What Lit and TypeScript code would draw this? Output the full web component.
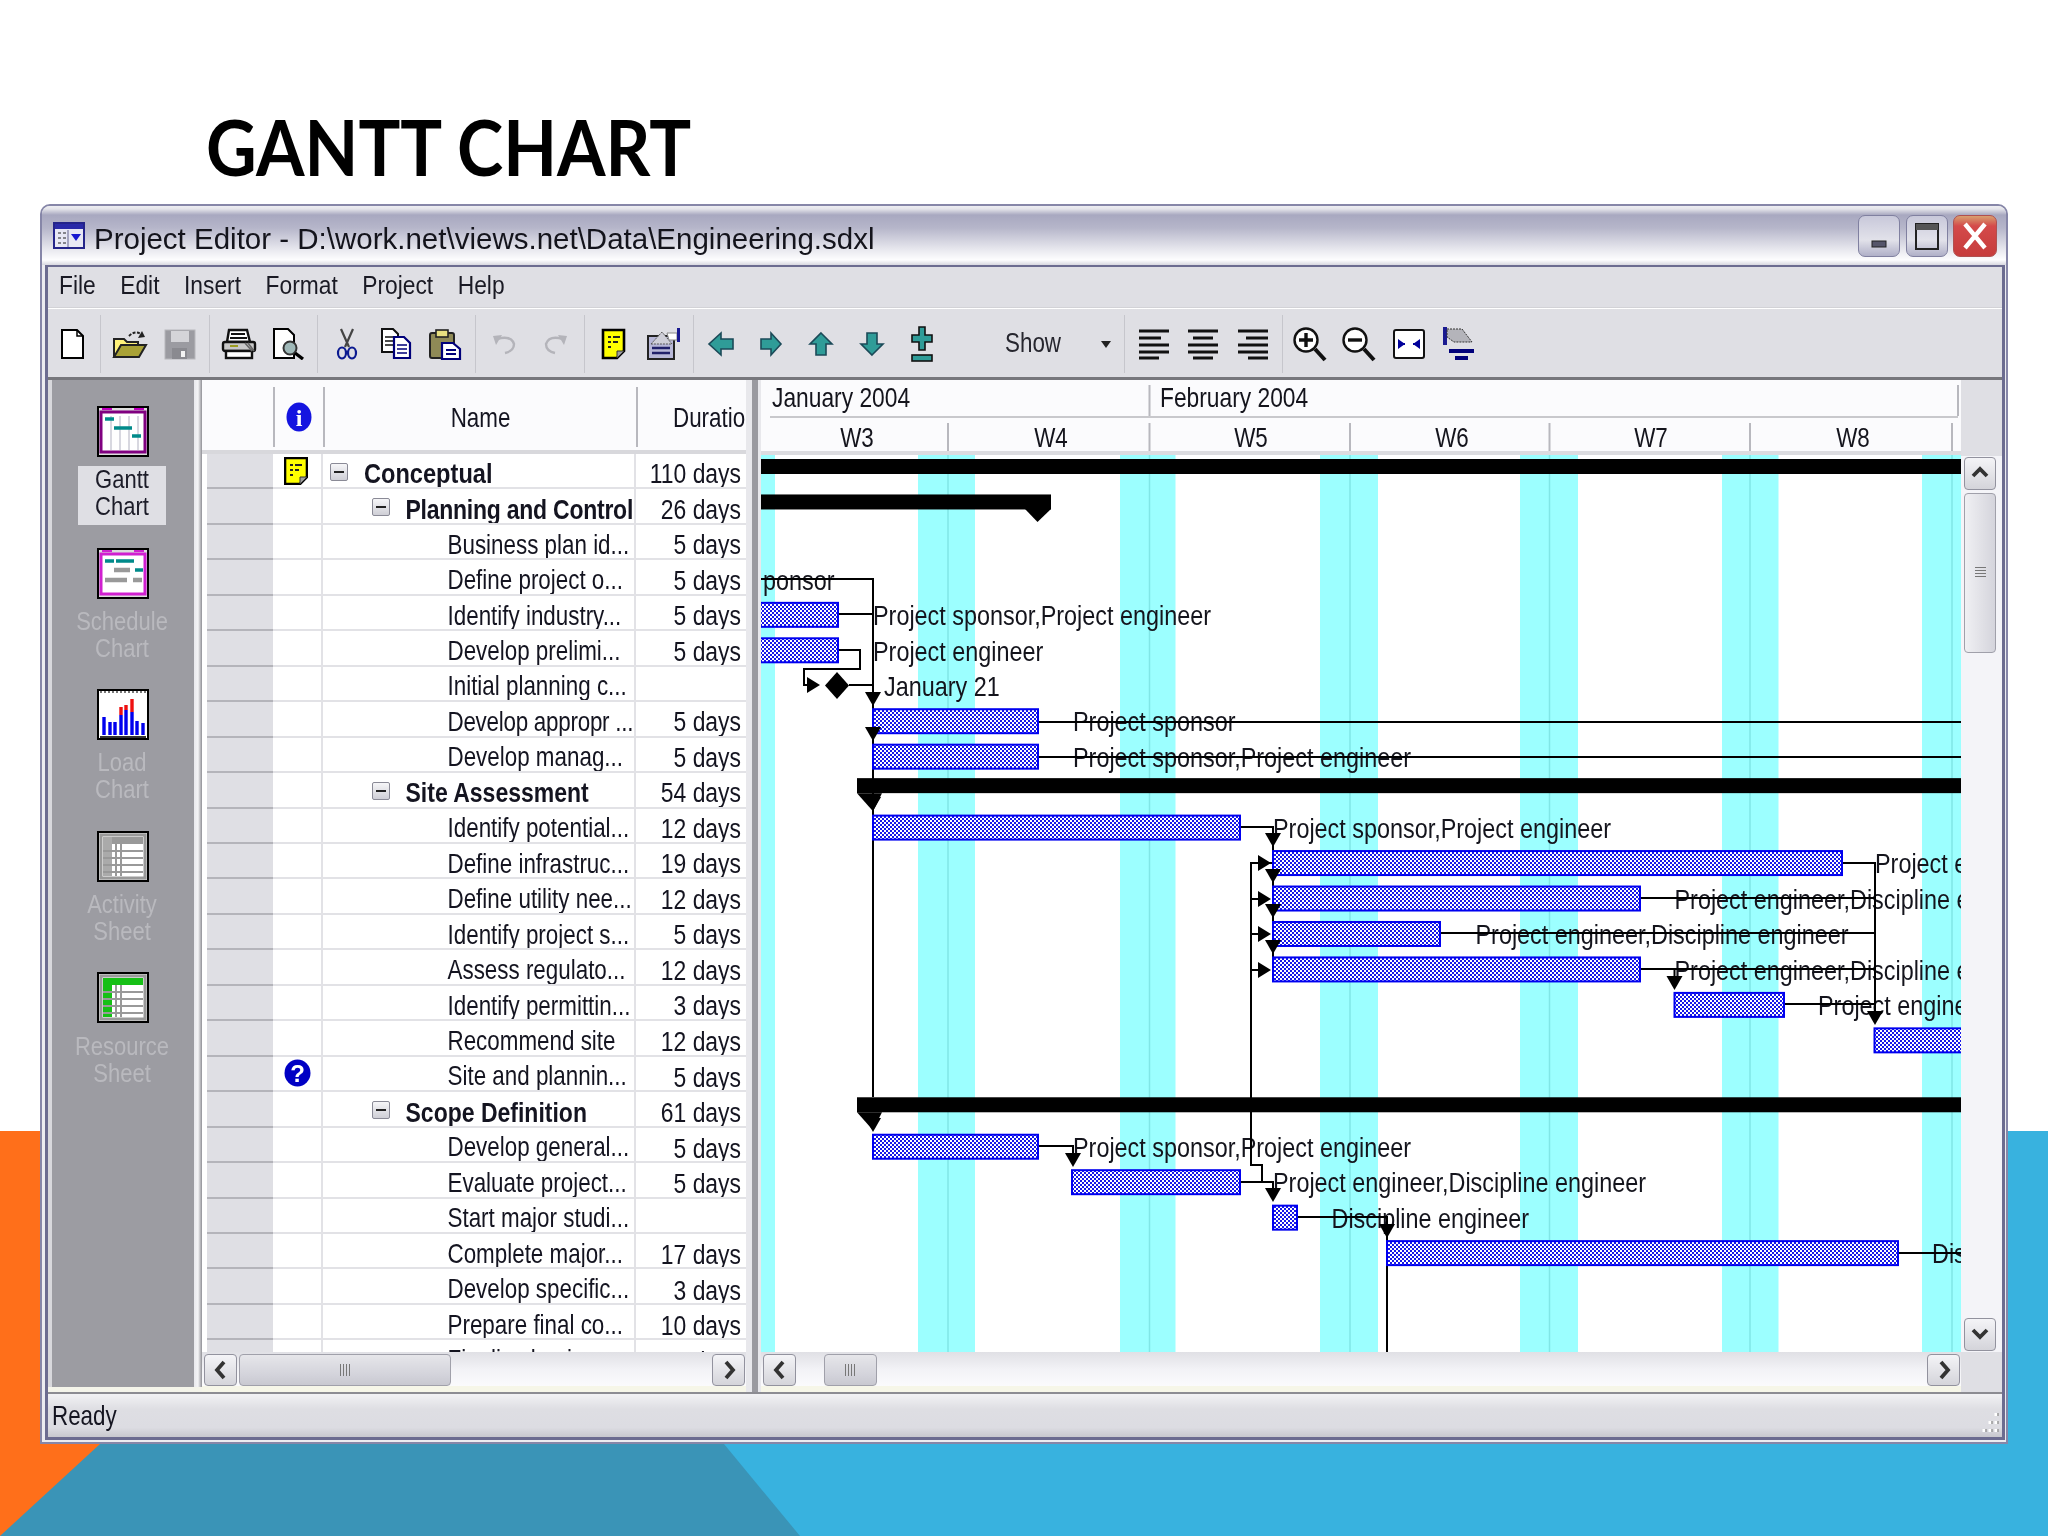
import { LitElement, html, svg, css } from 'lit';
import { customElement } from 'lit/decorators.js';

type Row = { name: string; dur: string; level: number; mark?: 'note' | 'help'; tight?: boolean };

const ROWS: Row[] = [
  { name: 'Conceptual', dur: '110 days', level: 0, mark: 'note' },
  { name: 'Planning and Control', dur: '26 days', level: 1, tight: true },
  { name: 'Business plan id...', dur: '5 days', level: 2 },
  { name: 'Define project o...', dur: '5 days', level: 2 },
  { name: 'Identify industry...', dur: '5 days', level: 2 },
  { name: 'Develop prelimi...', dur: '5 days', level: 2 },
  { name: 'Initial planning c...', dur: '', level: 2 },
  { name: 'Develop appropr ...', dur: '5 days', level: 2, tight: true },
  { name: 'Develop manag...', dur: '5 days', level: 2 },
  { name: 'Site Assessment', dur: '54 days', level: 1 },
  { name: 'Identify potential...', dur: '12 days', level: 2 },
  { name: 'Define infrastruc...', dur: '19 days', level: 2 },
  { name: 'Define utility nee...', dur: '12 days', level: 2 },
  { name: 'Identify project s...', dur: '5 days', level: 2 },
  { name: 'Assess regulato...', dur: '12 days', level: 2 },
  { name: 'Identify permittin...', dur: '3 days', level: 2 },
  { name: 'Recommend site', dur: '12 days', level: 2 },
  { name: 'Site and plannin...', dur: '5 days', level: 2, mark: 'help' },
  { name: 'Scope Definition', dur: '61 days', level: 1 },
  { name: 'Develop general...', dur: '5 days', level: 2 },
  { name: 'Evaluate project...', dur: '5 days', level: 2 },
  { name: 'Start major studi...', dur: '', level: 2 },
  { name: 'Complete major...', dur: '17 days', level: 2 },
  { name: 'Develop specific...', dur: '3 days', level: 2 },
  { name: 'Prepare final co...', dur: '10 days', level: 2 },
  { name: 'Finalize basis...', dur: '5 days', level: 2 },
];

// chart is drawn in page coordinates, the svg viewBox starts at 761,380
const ROW_H = 35.46;
const summaryTop = (r: number) => 459 + ROW_H * r;
const barTop = (r: number) => 460 + ROW_H * r;
const baseline = (r: number) => 483.2 + ROW_H * r;

const STRIPES = [
  [761, 775],
  [918, 975],
  [1120, 1175.5],
  [1320, 1378],
  [1520, 1578],
  [1722, 1778.5],
  [1922, 1961],
];
const WEEK_LINES = [948, 1149.5, 1350, 1549.5, 1750, 1952];
const WEEKS: [string, number][] = [
  ['W3', 857],
  ['W4', 1051],
  ['W5', 1251],
  ['W6', 1452],
  ['W7', 1651],
  ['W8', 1853],
];

const BARS = [
  [4, 759, 838],
  [5, 759, 838],
  [7, 873, 1038],
  [8, 873, 1038],
  [10, 873, 1240],
  [11, 1273, 1842],
  [12, 1273, 1640],
  [13, 1273, 1440],
  [14, 1273, 1640],
  [15, 1674.5, 1784],
  [16, 1874.5, 1970],
  [19, 873, 1038],
  [20, 1072, 1240],
  [21, 1273, 1297],
  [22, 1387, 1898],
];

const SPONSOR_ENG = 'Project sponsor,Project engineer';
const ENG_DISC = 'Project engineer,Discipline engineer';
const LABELS: [number, number, string][] = [
  [3, 763, 'ponsor'],
  [4, 873, SPONSOR_ENG],
  [5, 873, 'Project engineer'],
  [6, 884, 'January 21'],
  [7, 1073, 'Project sponsor'],
  [8, 1073, SPONSOR_ENG],
  [10, 1273, SPONSOR_ENG],
  [11, 1875, 'Project engineer'],
  [12, 1674.5, ENG_DISC],
  [13, 1475.5, ENG_DISC],
  [14, 1674.5, ENG_DISC],
  [15, 1818, 'Project engineer'],
  [19, 1073, SPONSOR_ENG],
  [20, 1273, ENG_DISC],
  [21, 1331.5, 'Discipline engineer'],
  [22, 1932, 'Discipline engineer'],
];

const LINKS = [
  '761,579 873,579 873,1097',
  '838,614 873,614',
  '838,650 860,650 860,669 804,669 804,685 815,685',
  '849,685 873,685',
  '1038,722 1961,722',
  '1038,757 1961,757',
  '1240,827 1273,827 1273,960',
  '1273,863 1251,863 1251,1165 1262,1165 1262,1181',
  '1251,899 1265,899',
  '1251,934 1265,934',
  '1251,970 1265,970',
  '1842,863 1875,863 1875,1015',
  '1640,898 1875,898',
  '1440,933 1875,933',
  '1640,969 1875,969',
  '1674.5,969 1674.5,980',
  '1784,1004 1875,1004',
  '1038,1146 1073,1146 1073,1160',
  '1240,1182 1273,1182 1273,1195',
  '1297,1217 1387,1217 1387,1352',
  '1898,1253 1961,1253',
];
const DOWN = [
  [873, 706],
  [873, 741],
  [873, 811],
  [873, 1132],
  [1273, 847],
  [1273, 883],
  [1273, 918],
  [1273, 954],
  [1674.5, 990],
  [1875, 1025],
  [1073, 1167],
  [1273, 1202],
  [1387, 1238],
];
const RIGHT = [
  [820, 685],
  [1271, 863],
  [1271, 899],
  [1271, 934],
  [1271, 970],
];

const ic = (w: number, h: number, body: unknown) =>
  html`<svg width=${w} height=${h} viewBox="0 0 ${w} ${h}">${body}</svg>`;

const tealArrow = (pts: string) =>
  ic(36, 32, svg`<polygon points=${pts} fill="#2f9c98" stroke="#1b4a58" stroke-width="1.6"/>`);

const TOOL_ICONS: Record<string, unknown> = {
  new: ic(36, 32, svg`<path d="M7 2h15l6 6v22H7z" fill="#fff" stroke="#000" stroke-width="2"/><path d="M22 2v6h6" fill="none" stroke="#000" stroke-width="1.5"/>`),
  open: ic(36, 32, svg`
    <path d="M2 29V11h10l3 3h11v4" fill="#fff27a" stroke="#222" stroke-width="2"/>
    <path d="M2 29 9 17h25l-7 12z" fill="#a9a236" stroke="#222" stroke-width="2"/>
    <path d="M17 8q6-6 12-2" fill="none" stroke="#222" stroke-width="2" stroke-dasharray="3 1.5"/>
    <path d="M26 10l7-1-3-6z" fill="#222"/>`),
  save: ic(36, 32, svg`
    <rect x="3" y="2" width="30" height="29" fill="#9b9ba1" stroke="#b8b8bc"/>
    <rect x="9" y="3" width="18" height="11" fill="#d4d4d8"/>
    <rect x="10" y="20" width="15" height="11" fill="#8a8a90"/>
    <rect x="19" y="23" width="4" height="6" fill="#f4f4f4"/>`),
  print: ic(36, 32, svg`
    <path d="M8 2h18l3 12H6z" fill="#fff" stroke="#111" stroke-width="2.4"/>
    <path d="M10 6h14M9 10h17" stroke="#111" stroke-width="2"/>
    <rect x="2" y="14" width="32" height="9" rx="2" fill="#c8c8c8" stroke="#111" stroke-width="2.4"/>
    <rect x="5" y="23" width="26" height="7" fill="#fff" stroke="#111" stroke-width="2.4"/>
    <path d="M9 18h8" stroke="#9c9c20" stroke-width="2"/>
    <path d="M27 15l6 8M24 15l7 8" stroke="#666" stroke-width="1.6"/>`),
  preview: ic(36, 32, svg`
    <path d="M3 1h14l6 6v23H3z" fill="#fff" stroke="#000" stroke-width="2"/>
    <circle cx="19" cy="20" r="6.5" fill="#9fb8b8" stroke="#333" stroke-width="2"/>
    <path d="M24 25l8 6" stroke="#000" stroke-width="3.4"/>`),
  cut: ic(24, 32, svg`
    <path d="M6 1l8 18M18 1l-8 18" stroke="#444" stroke-width="2.2"/>
    <ellipse cx="7" cy="25" rx="4" ry="5.5" fill="none" stroke="#0b1a90" stroke-width="2.2"/>
    <ellipse cx="17" cy="25" rx="4" ry="5.5" fill="none" stroke="#0b1a90" stroke-width="2.2"/>`),
  copy: ic(36, 32, svg`
    <path d="M3 1h11l5 5v18H3z" fill="#fff" stroke="#111" stroke-width="2"/>
    <path d="M6 9h9M6 13h9M6 17h9" stroke="#111" stroke-width="1.5"/>
    <path d="M15 9h10l6 6v15H15z" fill="#fff" stroke="#00007a" stroke-width="2.2"/>
    <path d="M18 17h10M18 21h10M18 25h10" stroke="#00007a" stroke-width="1.6"/>`),
  paste: ic(36, 32, svg`
    <rect x="2" y="5" width="24" height="25" rx="2" fill="#8f8a56" stroke="#222" stroke-width="2"/>
    <rect x="8" y="2" width="12" height="7" fill="#e8e080" stroke="#222" stroke-width="1.6"/>
    <path d="M14 15h11l7 6v10H14z" fill="#fff" stroke="#00007a" stroke-width="2.2"/>
    <path d="M18 22h10M18 26h10" stroke="#00007a" stroke-width="1.8"/>`),
  undo: ic(32, 28, svg`<path d="M8 9q14-4 17 5 0 7-9 9" fill="none" stroke="#b4b4ba" stroke-width="2.4"/><path d="M4 6l9-1-6 10z" fill="#b4b4ba"/>`),
  redo: ic(32, 28, svg`<path d="M24 9q-14-4-17 5 0 7 9 9" fill="none" stroke="#b4b4ba" stroke-width="2.4"/><path d="M28 6l-9-1 6 10z" fill="#b4b4ba"/>`),
  note: ic(26, 32, svg`
    <path d="M2 2h21v21l-7 7H2z" fill="#ffff00" stroke="#000" stroke-width="2.6"/>
    <path d="M7 9h3M12 9h7M7 14h3M12 14h5M7 19h3" stroke="#222" stroke-width="2"/>
    <path d="M16 30v-7h7z" fill="#a0a0a0" stroke="#333"/>`),
  props: ic(36, 32, svg`
    <rect x="2" y="8" width="26" height="23" fill="#b8b8d8" stroke="#222" stroke-width="2"/>
    <path d="M6 20h18M6 25h18" stroke="#20206a" stroke-width="2.4"/>
    <path d="M5 16 16 4l10 12z" fill="#cfcfd8" stroke="#555" stroke-dasharray="2 1"/>
    <path d="M21 5h10v7h-8z" fill="#fff" stroke="#888"/>
    <rect x="31" y="0" width="3" height="14" fill="#1a1a90"/>`),
  left: tealArrow('19,5 19,11 31,11 31,21 19,21 19,27 7,16'),
  right: tealArrow('18,5 18,11 8,11 8,21 18,21 18,27 28,16'),
  up: tealArrow('18,5 29,16 23,16 23,27 13,27 13,16 7,16'),
  down: tealArrow('18,27 29,16 23,16 23,5 13,5 13,16 7,16'),
  add: ic(36, 38, svg`
    <path d="M15 2h6v8h7v7h-7v8h-6v-8H8v-7h7z" fill="#2f9c98" stroke="#111" stroke-width="1.6"/>
    <rect x="8" y="30" width="20" height="6" fill="#2f9c98" stroke="#111" stroke-width="1.6"/>`),
  alignL: ic(34, 34, svg`<path d="M3 4h30M3 11h22M3 18h30M3 25h30M3 31h20" stroke="#111" stroke-width="3" fill="none"/>`),
  alignC: ic(34, 34, svg`<path d="M3 4h30M8 11h20M3 18h30M3 25h30M8 31h20" stroke="#111" stroke-width="3" fill="none"/>`),
  alignR: ic(34, 34, svg`<path d="M3 4h30M11 11h22M3 18h30M3 25h30M13 31h20" stroke="#111" stroke-width="3" fill="none"/>`),
  zoomIn: ic(36, 36, svg`
    <circle cx="14" cy="14" r="11.5" fill="#fff" stroke="#111" stroke-width="2.4"/>
    <path d="M7 14h14M14 7v14" stroke="#111" stroke-width="3.4"/>
    <path d="M23 23l10 11" stroke="#111" stroke-width="4"/>`),
  zoomOut: ic(36, 36, svg`
    <circle cx="14" cy="14" r="11.5" fill="#fff" stroke="#111" stroke-width="2.4"/>
    <path d="M7 14h14" stroke="#111" stroke-width="3.4"/>
    <path d="M23 23l10 11" stroke="#111" stroke-width="4"/>`),
  fit: ic(36, 34, svg`
    <rect x="3" y="3" width="30" height="28" rx="2" fill="#fff" stroke="#111" stroke-width="2"/>
    <path d="M14 17l-7-5v10zM22 17l7-5v10z" fill="#00009a"/>
    <path d="M12 17h2M22 17h2" stroke="#00009a" stroke-width="2"/>`),
  filter: ic(36, 38, svg`
    <rect x="3" y="2" width="4" height="18" fill="#1a1a90"/>
    <path d="M7 4h15l10 13H14L7 12z" fill="#b4b4ba" stroke="#333" stroke-dasharray="2 1"/>
    <rect x="9" y="24" width="25" height="4" fill="#00007a"/>
    <rect x="15" y="31" width="13" height="4" fill="#00007a"/>`),
};

const VIEW_ICONS: unknown[] = [
  svg`
    <rect x="4" y="6" width="44" height="40" fill="#fff" stroke="#800080" stroke-width="3"/>
    <path d="M5 3h10M37 3h10" stroke="#c000c0" stroke-width="2"/>
    <path d="M14 10v34M23 10v34M32 10v34M41 10v34" stroke="#d8d8e0" stroke-width="2"/>
    <path d="M8 13h9M17 22h18M35 30h9" stroke="#008a8a" stroke-width="3.4"/>`,
  svg`
    <rect x="4" y="6" width="44" height="40" fill="#fff" stroke="#d020d0" stroke-width="3"/>
    <path d="M5 3h10M37 3h10" stroke="#d020d0" stroke-width="2"/>
    <path d="M8 13h9M19 13h18M38 22h8" stroke="#008a8a" stroke-width="3.4"/>
    <path d="M17 22h16M8 32h22M36 32h9" stroke="#999" stroke-width="4.4"/>`,
  svg`
    <rect x="2" y="2" width="48" height="47" fill="#fff"/>
    <path d="M3 3h46" stroke="#777" stroke-width="2" stroke-dasharray="2 2"/>
    <path d="M7 46V28M13 46V33M18 46V33M24 46V26M29 46V21M35 46V23M40 46V32M46 46V34" stroke="#0000ee" stroke-width="3.4"/>
    <path d="M29 21V16M24 26V18M35 23V10" stroke="#ee1010" stroke-width="3.4"/>
    <path d="M3 48h46" stroke="#333" stroke-width="2"/>`,
  svg`
    <rect x="4" y="4" width="44" height="43" fill="#fff" stroke="#999" stroke-width="3"/>
    <rect x="6" y="6" width="40" height="7" fill="#999"/>
    <rect x="6" y="6" width="9" height="39" fill="#aaa"/>
    <path d="M6 20h40M6 27h40M6 34h40M6 41h40" stroke="#999" stroke-width="2"/>
    <path d="M24 6v39M19 6v39" stroke="#999" stroke-width="2"/>`,
  svg`
    <rect x="4" y="4" width="44" height="43" fill="#fff" stroke="#999" stroke-width="3"/>
    <rect x="6" y="6" width="40" height="7" fill="#16c016"/>
    <rect x="6" y="6" width="9" height="39" fill="#16c016"/>
    <path d="M6 20h40M6 27h40M6 34h40M6 41h40" stroke="#999" stroke-width="2"/>
    <path d="M24 13v32M19 13v32" stroke="#999" stroke-width="2"/>`,
];
const VIEWS = [
  ['Gantt', 'Chart'],
  ['Schedule', 'Chart'],
  ['Load', 'Chart'],
  ['Activity', 'Sheet'],
  ['Resource', 'Sheet'],
];

const chevron = (d: 'l' | 'r' | 'u' | 'd') => {
  const paths = { l: 'M13 2 6 10l7 8', r: 'M7 2l7 8-7 8', u: 'M3 13l7-7 7 7', d: 'M3 6l7 7 7-7' };
  return html`<svg width="20" height="20" viewBox="0 0 20 20"><path d=${paths[d]} fill="none" stroke="#333" stroke-width="3.8"/></svg>`;
};

@customElement('app-root')
export class AppRoot extends LitElement {
  static styles = css`
    :host {
      display: block;
      font-family: 'Liberation Sans', Arial, sans-serif;
      color: #141420;
    }
    .slide {
      position: relative;
      width: 2048px;
      height: 1536px;
      overflow: hidden;
      background: #fff;
    }
    .backdrop {
      position: absolute;
      left: 0;
      top: 0;
    }
    .title {
      position: relative;
      margin: 0;
      height: 204px;
      padding: 106px 0 0 206px;
      box-sizing: border-box;
      font-family: Lato, 'Open Sans', sans-serif;
      font-size: 77px;
      line-height: 80px;
      font-weight: 700;
      color: #000;
    }
    .title span {
      display: inline-block;
      transform: scaleX(0.907);
      transform-origin: left center;
    }
    .window {
      position: relative;
      margin-left: 40px;
      width: 1968px;
      height: 1240px;
      box-sizing: border-box;
      border: 2px solid #8686a8;
      border-radius: 10px 10px 0 0;
      padding: 0 1px 2px 3px;
      background: #ececf0;
      filter: blur(0.45px);
    }
    .titlebar {
      height: 59px;
      margin: 0 -1px 0 -3px;
      padding: 0 9px 0 11px;
      display: flex;
      align-items: center;
      border-radius: 8px 8px 0 0;
      background: linear-gradient(#eeeef2 0, #e4e4ea 3px, #a8a8c0 9px, #b6b6ca 22px, #e9e9ef 44px, #fdfdfe 54px, #d8d8e0 59px);
    }
    .caption {
      flex: 1;
      margin-left: 9px;
      font-size: 29.5px;
      color: #14141c;
      padding-top: 6px;
    }
    .win-btn {
      width: 42px;
      height: 42px;
      box-sizing: border-box;
      margin-left: 6px;
      border: 1.5px solid #8080a0;
      border-radius: 7px;
      background: linear-gradient(#c8c8da, #e2e2ea 60%, #b0b0c8);
      display: flex;
      align-items: center;
      justify-content: center;
    }
    .win-btn.close {
      width: 44px;
      margin-left: 5px;
      background: linear-gradient(#d8a070, #d44a4a 25%, #c63c3c);
      border-color: #b05050;
    }
    .frame {
      height: 1175px;
      box-sizing: border-box;
      border: solid #6c6c90;
      border-width: 2px 3px 3px 3px;
      background: #dfdfe4;
    }
    .t {
      display: inline-block;
      transform: scaleY(1.2);
      white-space: nowrap;
    }
    .menu {
      height: 40px;
      box-sizing: border-box;
      padding: 0 0 3px 11px;
      display: flex;
      align-items: center;
      gap: 24.5px;
      font-size: 22.8px;
      color: #1a1a24;
    }
    .menu .t {
      transform: scaleY(1.12);
    }
    .rule {
      height: 3px;
      background: linear-gradient(#bcbcc2, #fff 50%, #d0d0d6);
    }
    .toolbar {
      height: 67px;
      display: flex;
      align-items: stretch;
      font-size: 22.4px;
    }
    .group {
      display: flex;
      align-items: center;
      padding: 0 4.5px;
      border-right: 1.5px solid #c6c6cc;
      margin: 5px 0 4px;
      box-sizing: border-box;
    }
    .group.first {
      width: 53px;
      padding-left: 0;
    }
    .group.w109 {
      width: 109px;
    }
    .group.w108 {
      width: 108px;
    }
    .group.w158 {
      width: 158px;
    }
    .group.nav {
      width: 431px;
      padding: 0 0 0 1px;
    }
    .group.align {
      width: 158px;
      padding-left: 3px;
    }
    .group.last {
      border-right: 0;
      padding-left: 2px;
    }
    .tool {
      width: 49.5px;
      flex: none;
      display: flex;
      align-items: center;
      justify-content: center;
    }
    .nav .tool {
      width: 50.5px;
    }
    .show {
      display: flex;
      align-items: center;
      margin-left: 57.5px;
      width: 116px;
      justify-content: space-between;
      color: #26262e;
    }
    .caret {
      width: 0;
      height: 0;
      border: 5px solid transparent;
      border-top: 7px solid #222;
      border-bottom: 0;
      margin-right: 10px;
    }
    .hard-rule {
      height: 3px;
      background: #77777c;
    }
    .main {
      height: 1012px;
      display: flex;
      background: #f4f4ea;
    }
    .views {
      width: 146px;
      box-sizing: border-box;
      padding: 26px 2px 0 0;
      margin-bottom: 5px;
      border-left: 4px solid #d8d8dc;
      background: #9c9ca2;
      flex: none;
    }
    .view {
      height: 141.6px;
      display: flex;
      flex-direction: column;
      align-items: center;
      font-size: 22px;
      line-height: 27px;
      color: #b9b9be;
    }
    .view svg {
      flex: none;
      margin: 0 -2px 9px 0;
      background: #ddd;
      outline: 2px solid #000;
      outline-offset: -2px;
    }
    .view .lbl {
      width: 88px;
      height: 59px;
      box-sizing: border-box;
      display: flex;
      flex-direction: column;
      align-items: center;
    }
    .view.on .lbl {
      background: #dfdfe4;
      color: #1c1c28;
    }
    .gutter {
      width: 8px;
      flex: none;
      margin-bottom: 5px;
      background: linear-gradient(90deg, #e8e8ec, #f4f4f6 50%, #909096);
    }
    .table {
      width: 544px;
      flex: none;
      background: #fff;
      display: flex;
      flex-direction: column;
    }
    .thead {
      height: 74px;
      flex: none;
      box-sizing: border-box;
      background: #fbfbfd;
      border-bottom: 4px solid #d8d8dc;
      display: grid;
      grid-template-columns: 71px 50px 313px 1fr;
      font-size: 22.4px;
      padding-top: 7px;
      padding-bottom: 3px;
      overflow: hidden;
    }
    .thead > div {
      display: flex;
      align-items: center;
      justify-content: center;
      border-left: 2px solid #b8b8be;
      box-sizing: border-box;
    }
    .thead > div:first-child {
      border-left: 0;
    }
    .thead .t {
      margin-top: 4px;
    }
    .thead > .dur {
      justify-content: flex-start;
      padding-left: 35px;
      overflow: hidden;
    }
    .rows {
      height: 898px;
      flex: none;
      overflow: hidden;
      font-size: 22.4px;
    }
    .row {
      height: 35.46px;
      display: grid;
      grid-template-columns: 5px 66px 50px 313px 1fr;
      background: #fff;
    }
    .row > div {
      box-sizing: border-box;
      border-bottom: 2px solid #e2e2e6;
      display: flex;
      align-items: center;
      overflow: hidden;
    }
    .row > .pad {
      border-bottom: 0;
    }
    .row > .head {
      background: #dfdfe4;
      border-bottom: 2px solid #b4b4ba;
    }
    .row > .mark {
      border-right: 2px solid #e2e2e6;
      padding-left: 11px;
    }
    .row > .name {
      border-right: 2px solid #e2e2e6;
      padding-top: 8px;
    }
    .row > .dur {
      justify-content: flex-end;
      padding: 8px 5px 0 0;
      font-size: 22.9px;
    }
    .l0 {
      padding-left: 7px;
    }
    .l1 {
      padding-left: 48.5px;
    }
    .l2 {
      padding-left: 124.5px;
    }
    .b {
      font-weight: 700;
      font-size: 23px;
    }
    .l0 .b {
      font-size: 23.6px;
    }
    .tight {
      letter-spacing: -0.25px;
    }
    .toggle {
      width: 18px;
      height: 18px;
      box-sizing: border-box;
      flex: none;
      margin-right: 16px;
      margin-top: -6px;
      border: 1.5px solid #8a8a96;
      border-radius: 2px;
      background: linear-gradient(#f6f6f8, #cfcfd6);
      display: flex;
      align-items: center;
      justify-content: center;
    }
    .toggle::after {
      content: '';
      width: 10px;
      height: 2px;
      background: #222;
    }
    .hbar {
      height: 40px;
      flex: none;
      box-sizing: border-box;
      padding: 2px 1px 0 2px;
      border-bottom: 6px solid #f6f6e8;
      background: linear-gradient(#e0e0e5, #f2f2f6 50%, #fbfbfd);
      display: flex;
      align-items: flex-start;
    }
    .sbtn {
      width: 33px;
      height: 32px;
      flex: none;
      box-sizing: border-box;
      border: 1.5px solid #92929e;
      border-radius: 4px;
      background: linear-gradient(#f4f4f7, #d4d4da);
      display: flex;
      align-items: center;
      justify-content: center;
    }
    .thumb {
      height: 32px;
      flex: none;
      box-sizing: border-box;
      border: 1.5px solid #a0a0aa;
      border-radius: 4px;
      background: linear-gradient(#e6e6ea, #d2d2da 70%, #c8c8d0);
      display: flex;
      align-items: center;
      justify-content: center;
    }
    .grip {
      width: 11px;
      height: 12px;
      background: repeating-linear-gradient(90deg, #777 0 1px, transparent 1px 3px);
    }
    .grip.h {
      background: repeating-linear-gradient(#777 0 1px, transparent 1px 3px);
    }
    .spacer {
      flex: 1;
    }
    .thumb.long {
      width: 212px;
      margin-left: 2px;
    }
    .thumb.short {
      width: 53px;
      margin-left: 28px;
    }
    .splitter {
      width: 15px;
      flex: none;
      box-sizing: border-box;
      background: linear-gradient(90deg, #e8e8ec 0 6px, #9a9aa0 6px 12px, #e8e8ec 12px);
    }
    .chart-pane {
      width: 1241px;
      flex: none;
      display: grid;
      grid-template-columns: 1200px 41px;
      grid-template-rows: 972px 40px;
    }
    .chart {
      display: block;
      background: #fff;
    }
    .vbar {
      box-sizing: border-box;
      padding: 76.7px 6px 1.3px 3px;
      background: linear-gradient(#dfdfe4 0 76px, #f4f4f8 76px);
      display: flex;
      flex-direction: column;
      align-items: center;
    }
    .vbar .sbtn {
      width: 32px;
      height: 33px;
    }
    .vbar .thumb {
      width: 32px;
      height: 160px;
      margin-top: 3px;
      background: linear-gradient(90deg, #f0f0f3, #d4d4dc);
    }
    .corner {
      background: #dfdfe4;
    }
    .status {
      height: 45px;
      box-sizing: border-box;
      border-top: 2px solid #8c8c92;
      padding: 2px 0 0 4px;
      background: linear-gradient(#f2f2f4, #dedee3 35%, #dcdce2 78%, #c8c8ce);
      display: flex;
      align-items: center;
      justify-content: space-between;
      font-size: 22.4px;
    }
    .resize {
      align-self: flex-end;
      margin: 0 2px 2px 0;
    }
  `;

  private tools(names: string[]) {
    return names.map((n) => html`<div class="tool">${TOOL_ICONS[n]}</div>`);
  }

  private chartSvg() {
    const lbl = (x: number, y: number, s: string, size = 23.4) =>
      svg`<text transform="translate(${x} ${y}) scale(1 1.2)" font-size=${size} fill="#14141c">${s}</text>`;
    return html`<svg class="chart" width="1200" height="972" viewBox="761 380 1200 972" font-family="'Liberation Sans', Arial, sans-serif">
      <defs>
        <pattern id="hatch" width="4" height="4" patternUnits="userSpaceOnUse">
          <rect width="4" height="4" fill="#fff"/>
          <rect width="2" height="2" fill="#1818e8"/>
          <rect x="2" y="2" width="2" height="2" fill="#1818e8"/>
        </pattern>
      </defs>
      <rect x="761" y="380" width="1200" height="75" fill="#fbfbfd"/>
      <path d="M770 417H1958" stroke="#c8c8cc" stroke-width="2"/>
      <path d="M1149.5 385V416M1958 385V416" stroke="#b8b8be" stroke-width="2"/>
      ${lbl(772, 407, 'January 2004', 22.8)}
      ${lbl(1160, 407, 'February 2004', 22.8)}
      ${WEEK_LINES.map((x) => svg`<path d="M${x} 423V453" stroke="#b8b8be" stroke-width="2"/>`)}
      ${WEEKS.map(([t, x]) => svg`<text transform="translate(${x} 447) scale(1 1.2)" font-size="22.4" text-anchor="middle" fill="#14141c">${t}</text>`)}
      <rect x="761" y="451" width="1200" height="4" fill="#dcdce0"/>
      ${STRIPES.map(([a, b]) => svg`<rect x=${a} y="455" width=${b - a} height="897" fill="#9cffff"/>`)}
      ${WEEK_LINES.map((x) => svg`<path d="M${x} 455V1352" stroke="#80e6e6" stroke-width="1.5"/>`)}

      ${[0, 9, 18].map((r) => svg`<rect x=${r ? 857 : 761} y=${summaryTop(r)} width="1200" height="15" fill="#000"/>`)}
      <rect x="761" y=${summaryTop(1)} width="290" height="15" fill="#000"/>
      <polygon points="1025,509 1051,509 1037.5,522" fill="#000"/>
      ${[9, 18].map((r) => svg`<polygon points="857,${summaryTop(r) + 15} 882,${summaryTop(r) + 15} 873,${summaryTop(r) + 33}" fill="#000"/>`)}

      ${LABELS.map(([r, x, s]) => lbl(x, baseline(r), s))}
      ${LINKS.map((p) => svg`<polyline points=${p} fill="none" stroke="#000" stroke-width="2"/>`)}
      ${BARS.map(([r, a, b]) => svg`<rect x=${a} y=${barTop(r) + 1} width=${b - a} height="24" fill="url(#hatch)" stroke="#0000f0" stroke-width="2"/>`)}
      ${DOWN.map(([x, y]) => svg`<polygon points="${x - 8},${y - 14} ${x + 8},${y - 14} ${x},${y}" fill="#000"/>`)}
      ${RIGHT.map(([x, y]) => svg`<polygon points="${x - 13},${y - 8} ${x - 13},${y + 8} ${x},${y}" fill="#000"/>`)}
      <polygon points="825,685.5 837,672 849,685.5 837,699" fill="#000"/>
    </svg>`;
  }

  private renderRow(r: Row) {
    return html`<div class="row">
      <div class="pad"></div>
      <div class="head"></div>
      <div class="mark">
        ${r.mark === 'note'
          ? html`<svg width="24" height="28" viewBox="0 0 24 28">
              <path d="M1 1h22v19l-7 7H1z" fill="#ffff00" stroke="#000" stroke-width="2.6"/>
              <path d="M6 8h3M11 8h7M6 13h3M11 13h4M6 18h3" stroke="#222" stroke-width="2"/>
              <path d="M16 27v-7h7z" fill="#a0a0a0" stroke="#333"/>
            </svg>`
          : r.mark === 'help'
            ? html`<svg width="27" height="28" viewBox="0 0 27 28">
                <ellipse cx="13.5" cy="14" rx="13" ry="13.5" fill="#0000c4"/>
                <text x="13.5" y="23" font-size="24" font-weight="700" text-anchor="middle" fill="#fff" font-family="'Liberation Sans', sans-serif">?</text>
              </svg>`
            : ''}
      </div>
      <div class="name l${r.level}">
        ${r.level < 2 ? html`<span class="toggle"></span>` : ''}
        <span class="t ${r.level < 2 ? 'b' : ''} ${r.tight ? 'tight' : ''}">${r.name}</span>
      </div>
      <div class="dur"><span class="t">${r.dur}</span></div>
    </div>`;
  }

  render() {
    return html`<div class="slide">
      <svg class="backdrop" width="2048" height="1536" viewBox="0 0 2048 1536">
        <rect y="1131" width="2048" height="405" fill="#38b2df"/>
        <rect y="1131" width="100" height="405" fill="#ff6f1a"/>
        <polygon points="100,1444 724,1444 800,1536 0,1536" fill="#3a94b7"/>
      </svg>
      <h1 class="title"><span>GANTT CHART</span></h1>
      <div class="window">
        <div class="titlebar">
          <svg width="32" height="27" viewBox="0 0 32 27">
            <rect x="1" y="1" width="30" height="25" fill="#e8e8f4" stroke="#24248a" stroke-width="2"/>
            <rect x="2" y="2" width="28" height="5" fill="#2a2aa8"/>
            <path d="M15 8v17" stroke="#9090b0" stroke-width="1.5"/>
            <path d="M5 11h3M10 11h3M5 16h3M10 16h3M5 21h3M10 21h3" stroke="#222"/>
            <path d="M18 12h10l-5 7z" fill="#1818d0"/>
          </svg>
          <span class="caption">Project Editor - D:\\work.net\\views.net\\Data\\Engineering.sdxl</span>
          <div class="win-btn">
            <svg width="20" height="24" viewBox="0 0 20 24"><rect x="3" y="17" width="14" height="6" fill="#55556a" stroke="#222"/></svg>
          </div>
          <div class="win-btn">
            <svg width="26" height="30" viewBox="0 0 26 30"><rect x="2" y="3" width="22" height="25" fill="none" stroke="#222" stroke-width="2"/><rect x="2" y="3" width="22" height="6" fill="#555"/></svg>
          </div>
          <div class="win-btn close">
            <svg width="28" height="30" viewBox="0 0 28 30"><path d="M4 3l20 24M24 3 4 27" stroke="#fff" stroke-width="4.4"/></svg>
          </div>
        </div>
        <div class="frame">
          <div class="menu">
            ${['File', 'Edit', 'Insert', 'Format', 'Project', 'Help'].map((m) => html`<span class="t">${m}</span>`)}
          </div>
          <div class="rule"></div>
          <div class="toolbar">
            <div class="group first">${this.tools(['new'])}</div>
            <div class="group w109">${this.tools(['open', 'save'])}</div>
            <div class="group w108">${this.tools(['print', 'preview'])}</div>
            <div class="group w158">${this.tools(['cut', 'copy', 'paste'])}</div>
            <div class="group w109">${this.tools(['undo', 'redo'])}</div>
            <div class="group w109">${this.tools(['note', 'props'])}</div>
            <div class="group nav">
              ${this.tools(['left', 'right', 'up', 'down', 'add'])}
              <div class="show"><span class="t">Show</span><span class="caret"></span></div>
            </div>
            <div class="group align">${this.tools(['alignL', 'alignC', 'alignR'])}</div>
            <div class="group last">${this.tools(['zoomIn', 'zoomOut', 'fit', 'filter'])}</div>
          </div>
          <div class="hard-rule"></div>
          <div class="main">
            <div class="views">
              ${VIEWS.map(
                (v, i) => html`<div class="view ${i === 0 ? 'on' : ''}">
                  <svg width="52" height="51" viewBox="0 0 52 51">${VIEW_ICONS[i]}</svg>
                  <div class="lbl">${v.map((t) => html`<span class="t">${t}</span>`)}</div>
                </div>`,
              )}
            </div>
            <div class="gutter"></div>
            <div class="table">
              <div class="thead">
                <div></div>
                <div>
                  <svg width="26" height="30" viewBox="0 0 26 30">
                    <ellipse cx="13" cy="15" rx="12.5" ry="14.5" fill="#1414e0"/>
                    <text x="13" y="24" font-size="24" font-weight="700" text-anchor="middle" fill="#fff" font-family="'Liberation Serif', serif">i</text>
                  </svg>
                </div>
                <div><span class="t">Name</span></div>
                <div class="dur"><span class="t">Duration</span></div>
              </div>
              <div class="rows">${ROWS.map((r) => this.renderRow(r))}</div>
              <div class="hbar">
                <div class="sbtn">${chevron('l')}</div>
                <div class="thumb long"><span class="grip"></span></div>
                <div class="spacer"></div>
                <div class="sbtn">${chevron('r')}</div>
              </div>
            </div>
            <div class="splitter"></div>
            <div class="chart-pane">
              ${this.chartSvg()}
              <div class="vbar">
                <div class="sbtn">${chevron('u')}</div>
                <div class="thumb"><span class="grip h"></span></div>
                <div class="spacer"></div>
                <div class="sbtn">${chevron('d')}</div>
              </div>
              <div class="hbar">
                <div class="sbtn">${chevron('l')}</div>
                <div class="thumb short"><span class="grip"></span></div>
                <div class="spacer"></div>
                <div class="sbtn">${chevron('r')}</div>
              </div>
              <div class="corner"></div>
            </div>
          </div>
          <div class="status">
            <span class="t">Ready</span>
            <svg class="resize" width="24" height="26" viewBox="0 0 24 26">
              <path d="M20 4v3M14 12v3M20 12v3M8 20v3M14 20v3M20 20v3" stroke="#fff" stroke-width="3"/>
              <path d="M22 4v3M16 12v3M22 12v3M10 20v3M16 20v3M22 20v3" stroke="#999" stroke-width="1.5"/>
            </svg>
          </div>
        </div>
      </div>
    </div>`;
  }
}
